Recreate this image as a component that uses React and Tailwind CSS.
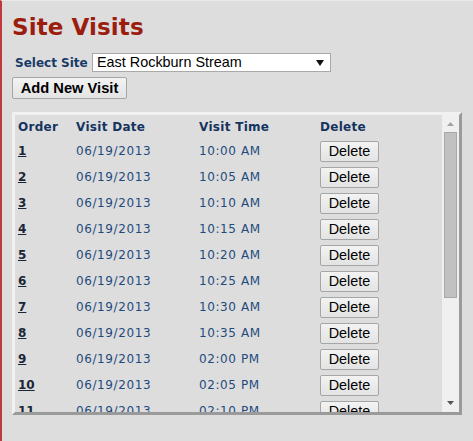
import React from "react";

const VISITS = [
  ["1", "10:00 AM"],
  ["2", "10:05 AM"],
  ["3", "10:10 AM"],
  ["4", "10:15 AM"],
  ["5", "10:20 AM"],
  ["6", "10:25 AM"],
  ["7", "10:30 AM"],
  ["8", "10:35 AM"],
  ["9", "02:00 PM"],
  ["10", "02:05 PM"],
  ["11", "02:10 PM"],
];

const verdana = "font-['DejaVu_Sans',Verdana,sans-serif]";
const arial = "font-['Liberation_Sans',Arial,sans-serif]";

const btn =
  "bg-gradient-to-b from-[#f3f3f3] to-[#e3e3e3] border border-[#a6a6a6] rounded-[2px] text-black leading-none";

export default function App() {
  return (
    <div className="min-h-[441px] bg-[#dddddd] border-l-2 border-t border-l-[#c0393b] border-t-[#e9e9e9] pl-[10px] pt-[12px]">
      <h1
        className={`${verdana} text-[23px] font-bold text-[#9b1d0e] leading-[28px] tracking-[0.1px]`}
      >
        Site Visits
      </h1>

      <div className="flex items-center mt-[12px] h-[19px]">
        <label
          className={`${verdana} text-[12px] font-bold text-[#183a66] pl-[3px] w-[80px]`}
        >
          Select Site
        </label>
        <div className="relative w-[239px] h-[19px] bg-white border border-[#a9a9a9]">
          <span
            className={`${arial} absolute left-[4px] top-0 text-[14.4px] leading-[17px] text-black`}
          >
            East Rockburn Stream
          </span>
          <svg
            className="absolute right-[6px] top-[6px]"
            width="8"
            height="6"
            viewBox="0 0 8 6"
          >
            <path d="M0 0h8L4 6z" fill="#111" />
          </svg>
        </div>
      </div>

      <button
        type="button"
        className={`${btn} ${arial} mt-[5px] w-[115px] h-[22px] text-[14.7px] font-bold`}
      >
        Add New Visit
      </button>

      <div className="mt-[13px] w-[450px] h-[303px] border-[3px] border-t-[#f1f1f1] border-l-[#f1f1f1] border-b-[#9a9a9a] border-r-[#9a9a9a] flex overflow-hidden">
        <div className="flex-1 overflow-hidden pl-[3px]">
          <div
            className={`${verdana} grid grid-cols-[58px_123px_121px_1fr] h-[23px] items-center text-[12px] font-bold text-[#15335f] tracking-[0.3px]`}
          >
            <span>Order</span>
            <span>Visit Date</span>
            <span>Visit Time</span>
            <span>Delete</span>
          </div>
          {VISITS.map(([n, time]) => (
            <div
              key={n}
              className={`${verdana} grid grid-cols-[58px_123px_121px_1fr] h-[26px] items-center text-[12px] text-[#1d4b7e] tracking-[0.6px]`}
            >
              <a className="font-bold underline text-[#1a2636] tracking-normal">
                {n}
              </a>
              <span>06/19/2013</span>
              <span>{time}</span>
              <span>
                <button
                  type="button"
                  className={`${btn} ${arial} w-[59px] h-[21px] text-[14.4px] tracking-normal`}
                >
                  Delete
                </button>
              </span>
            </div>
          ))}
        </div>

        <div className="w-[17px] bg-[#f0f0f0] flex flex-col items-center">
          <svg className="mt-[7px]" width="7" height="4" viewBox="0 0 7 4">
            <path d="M3.5 0L7 4H0z" fill="#a3a3a3" />
          </svg>
          <div className="mt-[6px] w-[13px] h-[166px] bg-[#c1c1c1] border border-[#a8a8a8]" />
          <div className="flex-1" />
          <svg className="mb-[7px]" width="7" height="4" viewBox="0 0 7 4">
            <path d="M0 0h7L3.5 4z" fill="#555" />
          </svg>
        </div>
      </div>
    </div>
  );
}
